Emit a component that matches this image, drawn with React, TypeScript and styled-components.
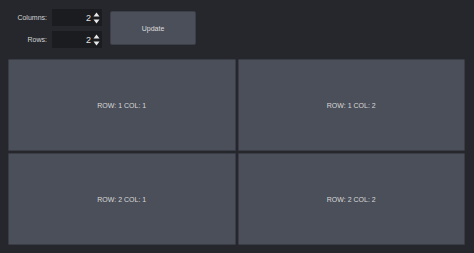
import styled, { createGlobalStyle } from 'styled-components'
import { useState } from 'react'

const GlobalStyle = createGlobalStyle`
  html, body {
    margin: 0;
    padding: 0;
    background: #25272c;
    font-family: 'Liberation Sans', Arial, sans-serif;
  }
`

function NumberField({ value, onChange }: { value: number; onChange: (v: number) => void }) {
  return (
    <Field>
      <Value>{value}</Value>
      <Spinner>
        <SpinBtn onClick={() => onChange(value + 1)}>
          <svg width='7' height='5' viewBox='0 0 7 5'>
            <path d='M3.5 0.5 L6.5 4.5 L0.5 4.5 Z' fill='#e8e8e8' />
          </svg>
        </SpinBtn>
        <SpinBtn onClick={() => onChange(Math.max(1, value - 1))}>
          <svg width='7' height='5' viewBox='0 0 7 5'>
            <path d='M0.5 0.5 L6.5 0.5 L3.5 4.5 Z' fill='#e8e8e8' />
          </svg>
        </SpinBtn>
      </Spinner>
    </Field>
  )
}

export default function App() {
  const [cols, setCols] = useState(2)
  const [rows, setRows] = useState(2)
  const [grid, setGrid] = useState({ rows: 2, cols: 2 })

  const cells = []
  for (let r = 1; r <= grid.rows; r++) {
    for (let c = 1; c <= grid.cols; c++) {
      cells.push(<Cell key={`${r}-${c}`}>ROW: {r} COL: {c}</Cell>)
    }
  }

  return (
    <Page>
      <GlobalStyle />
      <Toolbar>
        <Form>
          <Label>Columns:</Label>
          <NumberField value={cols} onChange={setCols} />
          <Label>Rows:</Label>
          <NumberField value={rows} onChange={setRows} />
        </Form>
        <UpdateButton onClick={() => setGrid({ rows, cols })}>Update</UpdateButton>
      </Toolbar>
      <Grid style={{ gridTemplateColumns: `repeat(${grid.cols}, 1fr)`, gridTemplateRows: `repeat(${grid.rows}, 1fr)` }}>
        {cells}
      </Grid>
    </Page>
  )
}

const Page = styled.div`
  width: 474px;
  height: 253px;
  display: flex;
  flex-direction: column;
  box-sizing: border-box;
  padding: 9px 9px 8px 8px;
`

const Toolbar = styled.div`
  display: flex;
  align-items: flex-start;
  height: 50px;
`

const Form = styled.div`
  display: grid;
  grid-template-columns: 39px 50px;
  column-gap: 5px;
  row-gap: 5px;
  align-items: center;
`

const Label = styled.span`
  font-size: 7px;
  color: #d4d4d4;
  text-align: right;
`

const Field = styled.div`
  display: flex;
  align-items: center;
  justify-content: flex-end;
  height: 17px;
  background: #1b1c1f;
  padding-right: 2px;
  box-sizing: border-box;
`

const Value = styled.span`
  font-size: 9px;
  color: #e0e0e0;
  margin-right: 2px;
`

const Spinner = styled.div`
  display: flex;
  flex-direction: column;
  gap: 2px;
`

const SpinBtn = styled.button`
  display: flex;
  padding: 0;
  border: none;
  background: none;
  cursor: pointer;
`

const UpdateButton = styled.button`
  margin: 2px 0 0 8px;
  width: 86px;
  height: 34px;
  background: #4b4f5a;
  border: 1px solid #3c3f47;
  border-radius: 2px;
  color: #dcdcdc;
  font-family: 'Liberation Sans', Arial, sans-serif;
  font-size: 7px;
  cursor: pointer;
`

const Grid = styled.div`
  flex: 1;
  display: grid;
  gap: 2px;
`

const Cell = styled.div`
  display: flex;
  align-items: center;
  justify-content: center;
  background: #4b4f5a;
  border: 1px solid #3a3d45;
  border-radius: 1px;
  color: #d8d8d8;
  font-size: 7px;
`
